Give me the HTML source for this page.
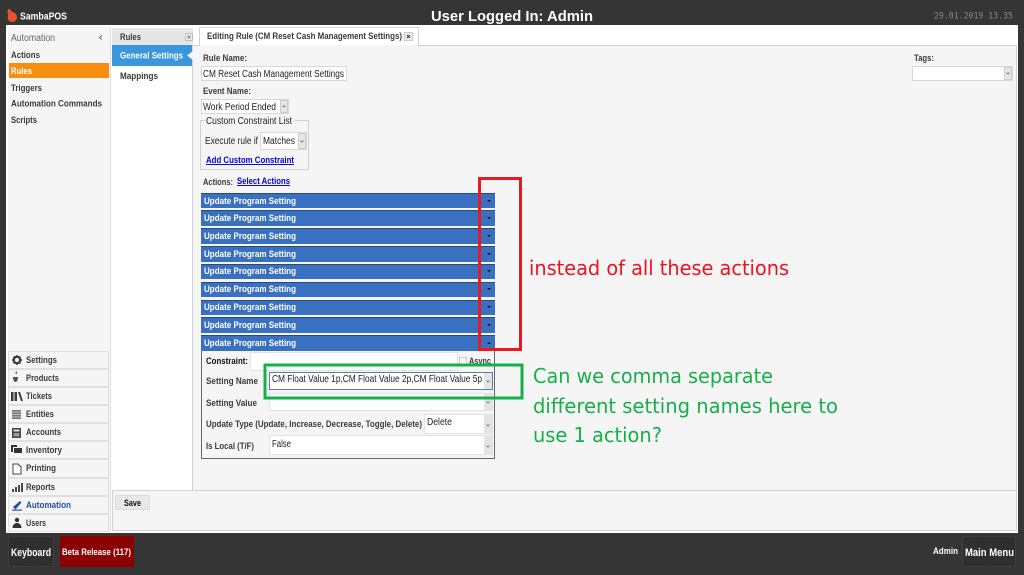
<!DOCTYPE html>
<html><head><meta charset="utf-8"><title>SambaPOS</title>
<style>
html,body{margin:0;padding:0;width:1024px;height:575px;overflow:hidden;background:#353535}
svg{display:block}
text{font-family:"Liberation Sans",sans-serif;font-size:9.6px;font-weight:bold;fill:#3a3a3a;stroke:none}
.n{font-weight:normal;fill:#222;-webkit-text-stroke:.25px #222;font-size:9.8px}
.w{fill:#fff}
.a{font-family:"DejaVu Sans",sans-serif;font-weight:normal;font-size:20px}
.l{fill:#0000e0;text-decoration:underline}
</style></head><body>
<svg width="1024" height="575" viewBox="0 0 1024 575" xmlns="http://www.w3.org/2000/svg">
<rect width="1024" height="575" fill="#353535"/>
<!-- top bar -->
<path d="M8 9c2 0 3 1 4 3 3 0 5 3 5 5 0 3-2 5-5 5-3 0-5-3-4-6 0-2-1-4 0-7z" fill="#e8522a"/>
<text x="20" y="19.500" class="w" style="font-size:10.500px" textLength="47" lengthAdjust="spacingAndGlyphs">SambaPOS</text>
<text x="431" y="21" class="w" style="font-size:15px" textLength="162" lengthAdjust="spacingAndGlyphs">User Logged In: Admin</text>
<text x="934" y="18.500" style="font-family:'DejaVu Sans Mono','Liberation Mono',monospace;font-size:9px;font-weight:normal;fill:#8a8a8a" textLength="79" lengthAdjust="spacingAndGlyphs">29.01.2019 13.35</text>
<!-- main panel -->
<rect x="6" y="25" width="1012" height="508" fill="#fff"/>
<rect x="8" y="27" width="102" height="504" fill="#f5f5f5"/>
<rect x="110" y="27" width="1" height="504" fill="#dedede"/>
<text x="11" y="41" style="font-weight:normal;fill:#666;font-size:10px" textLength="44" lengthAdjust="spacingAndGlyphs">Automation</text>
<path d="M102 35.500l-2.500 2 2.500 2" fill="none" stroke="#666"/>
<text x="11" y="58" textLength="29" lengthAdjust="spacingAndGlyphs">Actions</text>
<rect x="9" y="63" width="100" height="15" fill="#f78e10"/>
<text x="11" y="74" class="w" textLength="21" lengthAdjust="spacingAndGlyphs">Rules</text>
<text x="11" y="91" textLength="31" lengthAdjust="spacingAndGlyphs">Triggers</text>
<text x="11" y="106.500" textLength="91" lengthAdjust="spacingAndGlyphs">Automation Commands</text>
<text x="11" y="123" textLength="26" lengthAdjust="spacingAndGlyphs">Scripts</text>
<!-- sidebar bottom buttons -->
<g fill="#f5f5f5" stroke="#e0e0e0">
<rect x="8.500" y="351.500" width="100" height="17"/><rect x="8.500" y="369.500" width="100" height="17"/><rect x="8.500" y="387.500" width="100" height="17"/><rect x="8.500" y="405.500" width="100" height="17"/><rect x="8.500" y="423.500" width="100" height="17"/><rect x="8.500" y="441.500" width="100" height="17"/><rect x="8.500" y="459.500" width="100" height="18"/><rect x="8.500" y="478.500" width="100" height="17"/><rect x="8.500" y="496.500" width="100" height="17"/><rect x="8.500" y="514.500" width="100" height="17"/>
</g>
<g fill="#4a4a4a">
<circle cx="17" cy="360" r="3.200" fill="none" stroke="#333" stroke-width="2"/>
<path d="M17 355v1.500M17 363.500v1.500M12 360h1.500M20.500 360h1.500M13.500 356.500l1 1M19.500 362.500l1 1M13.500 363.500l1-1M19.500 357.500l1-1" stroke="#333" stroke-width="1.400"/>
<path d="M13 377h5c0 3-1 5-2.500 5s-2.500-2-2.500-5zM15 373l2-2v3z" fill="#555"/>
<path d="M11 392h2.500v9H11zM14.500 392h2.500v9h-2.500zM18 392l2 0 3 9h-2z" fill="#3c3c3c"/>
<rect x="12" y="410" width="9" height="9" fill="#777"/><path d="M12 412h9M12 414.500h9M12 417h9" stroke="#ddd" stroke-width=".7"/>
<rect x="12" y="428" width="9" height="10" fill="#444"/><rect x="13.500" y="429.500" width="6" height="2" fill="#ddd"/><rect x="13.500" y="433" width="6" height="3.500" fill="#999"/>
<path d="M11 445h6v2h-4v5h-2zM14 448h8v5h-8z" fill="#333"/>
<path d="M13 464h5l3 3v7h-8z" fill="#fff" stroke="#444"/>
<rect x="12" y="489" width="2" height="3"/><rect x="15" y="487" width="2" height="5"/><rect x="18" y="485" width="2" height="7"/><rect x="21" y="483" width="2" height="9"/>
<path d="M13 507l7-6 1.500 1.500-6 7z" fill="#234fa0"/><rect x="12" y="509.500" width="10" height="1.200" fill="#234fa0"/>
<circle cx="17" cy="520" r="2.200" fill="#333"/><path d="M12.500 528c0-3 2-5 4.500-5s4.500 2 4.500 5z" fill="#333"/>
</g>
<g>
<text x="26" y="363" textLength="31" lengthAdjust="spacingAndGlyphs">Settings</text>
<text x="26" y="381" textLength="33" lengthAdjust="spacingAndGlyphs">Products</text>
<text x="26" y="399" textLength="26" lengthAdjust="spacingAndGlyphs">Tickets</text>
<text x="26" y="417" textLength="28" lengthAdjust="spacingAndGlyphs">Entities</text>
<text x="26" y="435" textLength="35" lengthAdjust="spacingAndGlyphs">Accounts</text>
<text x="26" y="453" textLength="36" lengthAdjust="spacingAndGlyphs">Inventory</text>
<text x="26" y="471" textLength="30" lengthAdjust="spacingAndGlyphs">Printing</text>
<text x="26" y="490" textLength="29" lengthAdjust="spacingAndGlyphs">Reports</text>
<text x="26" y="508" style="fill:#1f4fa8" textLength="45" lengthAdjust="spacingAndGlyphs">Automation</text>
<text x="26" y="526" textLength="20" lengthAdjust="spacingAndGlyphs">Users</text>
</g>
<!-- rule list column -->
<rect x="112" y="28" width="81" height="17" fill="#e6e6e6"/>
<text x="120" y="40" textLength="21" lengthAdjust="spacingAndGlyphs">Rules</text>
<rect x="185.500" y="33.500" width="7" height="7" fill="#eee" stroke="#bbb"/>
<path d="M187.500 35.500l3 3M190.500 35.500l-3 3" stroke="#666" stroke-width=".8"/>
<rect x="112" y="45" width="80" height="21" fill="#3a96dd"/>
<text x="120" y="58.500" class="w" textLength="63" lengthAdjust="spacingAndGlyphs">General Settings</text>
<text x="120" y="79" textLength="38" lengthAdjust="spacingAndGlyphs">Mappings</text>
<!-- content panel -->
<rect x="192.500" y="45.500" width="824" height="445" fill="#f5f5f5" stroke="#d2d2d2"/>
<path d="M193 51l-6 4.500 6 4.500z" fill="#f5f5f5"/>
<path d="M199.500 45.500V27.500H418.500V45.500" fill="#fff" stroke="#d2d2d2"/>
<rect x="200" y="45" width="218" height="1" fill="#f5f5f5"/>
<text x="207" y="39" textLength="195" lengthAdjust="spacingAndGlyphs">Editing Rule (CM Reset Cash Management Settings)</text>
<rect x="404.500" y="32.500" width="8" height="8" fill="#eee" stroke="#ccc"/>
<path d="M407 35l3 3M410 35l-3 3" stroke="#333" stroke-width=".9"/>
<text x="203" y="61" textLength="44" lengthAdjust="spacingAndGlyphs">Rule Name:</text>
<rect x="201.500" y="66.500" width="145" height="14" fill="#fff" stroke="#d8d8d8"/>
<text x="203" y="77" class="n" textLength="141" lengthAdjust="spacingAndGlyphs">CM Reset Cash Management Settings</text>
<text x="203" y="94" textLength="48" lengthAdjust="spacingAndGlyphs">Event Name:</text>
<rect x="201.500" y="99.500" width="87" height="14" fill="#fff" stroke="#d8d8d8"/>
<rect x="280.500" y="100.500" width="7" height="12" fill="#e6e6e6" stroke="#ccc"/>
<path d="M282.500 105.500l1.500 1.500 1.500-1.500" fill="none" stroke="#666" stroke-width=".8"/>
<text x="203" y="110" class="n" textLength="73" lengthAdjust="spacingAndGlyphs">Work Period Ended</text>
<rect x="200.500" y="120.500" width="108" height="49" fill="none" stroke="#cfcfcf"/>
<rect x="205" y="118" width="90" height="6" fill="#f5f5f5"/>
<text x="206" y="124" class="n" textLength="86" lengthAdjust="spacingAndGlyphs">Custom Constraint List</text>
<text x="205" y="144" class="n" textLength="53" lengthAdjust="spacingAndGlyphs">Execute rule if</text>
<rect x="260.500" y="132.500" width="46" height="17" fill="#fff" stroke="#d8d8d8"/>
<rect x="298.500" y="133.500" width="7" height="15" fill="#e6e6e6" stroke="#ccc"/>
<path d="M300.500 140.500l1.500 1.500 1.500-1.500" fill="none" stroke="#666" stroke-width=".8"/>
<text x="263" y="144" class="n" textLength="32" lengthAdjust="spacingAndGlyphs">Matches</text>
<text x="206" y="163" class="l" textLength="88" lengthAdjust="spacingAndGlyphs">Add Custom Constraint</text>
<text x="203" y="185" textLength="30" lengthAdjust="spacingAndGlyphs">Actions:</text>
<text x="237" y="184" class="l" textLength="53" lengthAdjust="spacingAndGlyphs">Select Actions</text>
<!-- action bars -->
<g fill="#3a70c0">
<rect x="201" y="193" width="294" height="15"/><rect x="201" y="210" width="294" height="16"/><rect x="201" y="228" width="294" height="16"/><rect x="201" y="246" width="294" height="16"/><rect x="201" y="264" width="294" height="15"/><rect x="201" y="282" width="294" height="15"/><rect x="201" y="300" width="294" height="15"/><rect x="201" y="317" width="294" height="16"/>
</g>
<g fill="#2a4a7c">
<rect x="201" y="193" width="294" height="1"/><rect x="201" y="210" width="294" height="1"/><rect x="201" y="228" width="294" height="1"/><rect x="201" y="246" width="294" height="1"/><rect x="201" y="264" width="294" height="1"/><rect x="201" y="282" width="294" height="1"/><rect x="201" y="300" width="294" height="1"/><rect x="201" y="317" width="294" height="1"/>
</g>
<text x="204" y="204" class="w" textLength="92" lengthAdjust="spacingAndGlyphs">Update Program Setting</text>
<text x="204" y="221" class="w" textLength="92" lengthAdjust="spacingAndGlyphs">Update Program Setting</text>
<text x="204" y="239" class="w" textLength="92" lengthAdjust="spacingAndGlyphs">Update Program Setting</text>
<text x="204" y="257" class="w" textLength="92" lengthAdjust="spacingAndGlyphs">Update Program Setting</text>
<text x="204" y="274" class="w" textLength="92" lengthAdjust="spacingAndGlyphs">Update Program Setting</text>
<text x="204" y="292" class="w" textLength="92" lengthAdjust="spacingAndGlyphs">Update Program Setting</text>
<text x="204" y="310" class="w" textLength="92" lengthAdjust="spacingAndGlyphs">Update Program Setting</text>
<text x="204" y="328" class="w" textLength="92" lengthAdjust="spacingAndGlyphs">Update Program Setting</text>
<path fill="#111" d="M487 200h4l-2 2zM487 217h4l-2 2zM487 235h4l-2 2zM487 253h4l-2 2zM487 270h4l-2 2zM487 288h4l-2 2zM487 306h4l-2 2zM487 324h4l-2 2z"/>
<!-- expanded action -->
<rect x="201.500" y="335.500" width="293" height="123" fill="#f5f5f5" stroke="#666"/>
<rect x="201" y="335" width="294" height="16" fill="#3a70c0"/>
<rect x="201" y="335" width="294" height="1" fill="#2a4a7c"/>
<text x="204" y="346" class="w" textLength="92" lengthAdjust="spacingAndGlyphs">Update Program Setting</text>
<path d="M487 344h4l-2-2z" fill="#111"/>
<text x="206" y="364" style="fill:#111" textLength="42" lengthAdjust="spacingAndGlyphs">Constraint:</text>
<rect x="250.500" y="352.500" width="207" height="18" fill="#fff" stroke="#e2e2e2"/>
<rect x="459.500" y="357.500" width="7" height="8" fill="#fff" stroke="#ccc"/>
<text x="469" y="364" textLength="22" lengthAdjust="spacingAndGlyphs">Async</text>
<text x="206" y="384" textLength="52" lengthAdjust="spacingAndGlyphs">Setting Name</text>
<rect x="269.500" y="372.500" width="223" height="17" fill="#fff" stroke="#5f7aa8"/>
<rect x="484" y="373" width="8" height="16" fill="#e4e4e4"/>
<text x="272" y="382" class="n" textLength="210" lengthAdjust="spacingAndGlyphs">CM Float Value 1p,CM Float Value 2p,CM Float Value 5p</text>
<path d="M486.500 380.500l1.500 1.500 1.500-1.500" fill="none" stroke="#666" stroke-width=".8"/>
<text x="206" y="406" textLength="51" lengthAdjust="spacingAndGlyphs">Setting Value</text>
<rect x="269.500" y="393.500" width="223" height="17" fill="#fff" stroke="#e2e2e2"/>
<rect x="484" y="394" width="8" height="16" fill="#e4e4e4"/>
<path d="M486.500 401.500l1.500 1.500 1.500-1.500" fill="none" stroke="#666" stroke-width=".8"/>
<text x="206" y="427" textLength="216" lengthAdjust="spacingAndGlyphs">Update Type (Update, Increase, Decrease, Toggle, Delete)</text>
<rect x="424.500" y="414.500" width="68" height="19" fill="#fff" stroke="#e2e2e2"/>
<rect x="484" y="415" width="8" height="18" fill="#e4e4e4"/>
<path d="M486.500 424.500l1.500 1.500 1.500-1.500" fill="none" stroke="#666" stroke-width=".8"/>
<text x="427" y="425" class="n" textLength="25" lengthAdjust="spacingAndGlyphs">Delete</text>
<text x="206" y="449" textLength="48" lengthAdjust="spacingAndGlyphs">Is Local (T/F)</text>
<rect x="269.500" y="435.500" width="223" height="19" fill="#fff" stroke="#e2e2e2"/>
<rect x="484" y="436" width="8" height="18" fill="#e4e4e4"/>
<path d="M486.500 445.500l1.500 1.500 1.500-1.500" fill="none" stroke="#666" stroke-width=".8"/>
<text x="272" y="447" class="n" textLength="19" lengthAdjust="spacingAndGlyphs">False</text>
<!-- tags -->
<text x="914" y="61" textLength="20" lengthAdjust="spacingAndGlyphs">Tags:</text>
<rect x="912.500" y="66.500" width="100" height="14" fill="#fff" stroke="#d8d8d8"/>
<rect x="1004.500" y="67.500" width="7" height="12" fill="#e6e6e6" stroke="#ccc"/>
<path d="M1006.500 72.500l1.500 1.500 1.500-1.500" fill="none" stroke="#666" stroke-width=".8"/>
<!-- save panel -->
<rect x="112.500" y="490.500" width="904" height="40" fill="#f5f5f5" stroke="#d2d2d2"/>
<rect x="115.500" y="495.500" width="34" height="14" fill="#e8e8e8" stroke="#dcdcdc"/>
<text x="124" y="506" style="fill:#111" textLength="17" lengthAdjust="spacingAndGlyphs">Save</text>
<!-- annotations -->
<rect x="479.500" y="178.500" width="41" height="171" fill="none" stroke="#ea1a22" stroke-width="3"/>
<rect x="265" y="365" width="257" height="33" fill="none" stroke="#16b04a" stroke-width="3"/>
<text x="529" y="275" class="a" style="fill:#f01020" textLength="260" lengthAdjust="spacingAndGlyphs">instead of all these actions</text>
<text x="533" y="383" class="a" style="fill:#16b04a" textLength="240" lengthAdjust="spacingAndGlyphs">Can we comma separate</text>
<text x="533" y="413" class="a" style="fill:#16b04a" textLength="305" lengthAdjust="spacingAndGlyphs">different setting names here to</text>
<text x="533" y="442" class="a" style="fill:#16b04a" textLength="129" lengthAdjust="spacingAndGlyphs">use 1 action?</text>
<!-- bottom bar -->
<rect x="8.500" y="536.500" width="45" height="30" fill="#2f2f2f" stroke="#444" stroke-dasharray="2 1"/>
<text x="11" y="556" class="w" style="font-size:11px" textLength="40" lengthAdjust="spacingAndGlyphs">Keyboard</text>
<rect x="60" y="536" width="74" height="31" fill="#8b0000"/>
<text x="62" y="555" class="w" textLength="69" lengthAdjust="spacingAndGlyphs">Beta Release (117)</text>
<text x="933" y="554" class="w" textLength="25" lengthAdjust="spacingAndGlyphs">Admin</text>
<rect x="962.500" y="536.500" width="53" height="30" fill="#2f2f2f" stroke="#444" stroke-dasharray="2 1"/>
<text x="965" y="556" class="w" style="font-size:11px" textLength="49" lengthAdjust="spacingAndGlyphs">Main Menu</text>
</svg>
</body></html>
